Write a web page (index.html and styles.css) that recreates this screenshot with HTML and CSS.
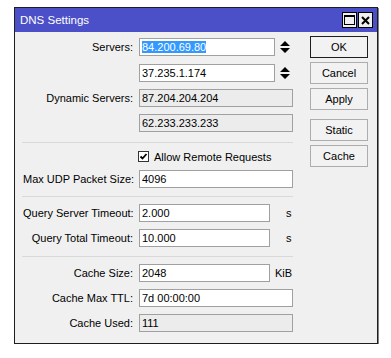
FILE: index.html
```html
<!DOCTYPE html>
<html lang="en">
<head>
    <meta charset="UTF-8">
    <meta name="viewport" content="width=device-width, initial-scale=1.0">
    <title>DNS Settings</title>
    <link rel="stylesheet" href="styles.css">
</head>
<body>
    <div class="window">
        <div class="titlebar">
            <span class="title">DNS Settings</span>
            <div class="title-buttons">
                <span class="tbtn">
                    <svg width="11" height="10" viewBox="0 0 11 10"><rect x="0.5" y="0.5" width="10" height="9" fill="none" stroke="#000"/><rect x="0" y="0" width="11" height="2" fill="#000"/></svg>
                </span>
                <span class="tbtn">
                    <svg width="9" height="9" viewBox="0 0 9 9"><path d="M1 1 L8 8 M8 1 L1 8" stroke="#000" stroke-width="2"/></svg>
                </span>
            </div>
        </div>
        <div class="content">
            <div class="form">
                <div class="row first">
                    <span class="label">Servers:</span>
                    <div class="field short"><span class="sel">84.200.69.80</span></div>
                    <span class="spin">
                        <svg width="10" height="14" viewBox="0 0 10 14"><path d="M5 1 L10 6 L0 6 Z M0 8 L10 8 L5 13 Z" fill="#000"/></svg>
                    </span>
                </div>
                <div class="row second">
                    <span class="label"></span>
                    <div class="field short">37.235.1.174</div>
                    <span class="spin">
                        <svg width="10" height="14" viewBox="0 0 10 14"><path d="M5 1 L10 6 L0 6 Z M0 8 L10 8 L5 13 Z" fill="#000"/></svg>
                    </span>
                </div>
                <div class="row">
                    <span class="label">Dynamic Servers:</span>
                    <div class="field wide readonly">87.204.204.204</div>
                </div>
                <div class="row">
                    <span class="label"></span>
                    <div class="field wide readonly">62.233.233.233</div>
                </div>
                <div class="sep sep-a"></div>
                <div class="check-row">
                    <span class="label"></span>
                    <span class="checkbox">
                        <svg width="9" height="9" viewBox="0 0 9 9"><path d="M1.5 4.5 L3.5 6.5 L7.5 2" fill="none" stroke="#000" stroke-width="1.8"/></svg>
                    </span>
                    <span class="check-label">Allow Remote Requests</span>
                </div>
                <div class="row">
                    <span class="label">Max UDP Packet Size:</span>
                    <div class="field wide">4096</div>
                </div>
                <div class="sep sep-b"></div>
                <div class="row after-sep">
                    <span class="label">Query Server Timeout:</span>
                    <div class="field mid">2.000</div>
                    <span class="unit unit-s">s</span>
                </div>
                <div class="row">
                    <span class="label">Query Total Timeout:</span>
                    <div class="field mid">10.000</div>
                    <span class="unit unit-s">s</span>
                </div>
                <div class="sep sep-c"></div>
                <div class="row after-sep">
                    <span class="label">Cache Size:</span>
                    <div class="field mid">2048</div>
                    <span class="unit unit-kib">KiB</span>
                </div>
                <div class="row">
                    <span class="label">Cache Max TTL:</span>
                    <div class="field wide">7d 00:00:00</div>
                </div>
                <div class="row">
                    <span class="label">Cache Used:</span>
                    <div class="field wide readonly">111</div>
                </div>
            </div>
            <div class="buttons">
                <button class="btn default">OK</button>
                <button class="btn">Cancel</button>
                <button class="btn">Apply</button>
                <button class="btn spaced">Static</button>
                <button class="btn">Cache</button>
            </div>
        </div>
    </div>
</body>
</html>
```

FILE: styles.css
```css
body {
    margin: 0;
    padding: 7px 0 0 14px;
    background: white;
    font-family: "Liberation Sans", Arial, sans-serif;
    font-size: 11px;
    color: #000;
}

.window {
    width: 362px;
    background: #f0f0f0;
    border: 1px solid #1e1e1e;
    box-shadow: 1px 1px 0 #808080;
}

.titlebar {
    height: 24px;
    background: #4b50c9;
    display: flex;
    align-items: center;
    justify-content: space-between;
    padding: 0 4px 0 5px;
}

.title {
    color: white;
    font-size: 11.5px;
}

.title-buttons {
    display: flex;
    gap: 1px;
}

.tbtn {
    width: 13px;
    height: 14px;
    border: 1px solid #000;
    background: #f0f0f0;
    display: flex;
    align-items: center;
    justify-content: center;
}

.content {
    display: flex;
    padding-bottom: 11px;
}

.form {
    width: 295px;
    display: flex;
    flex-direction: column;
    padding: 6px 0 0 8px;
    box-sizing: border-box;
}

.row {
    display: flex;
    align-items: center;
    height: 18px;
    margin-top: 7px;
}

.row.first {
    margin-top: 0;
}

.row.second {
    margin-top: 8px;
}

.label {
    width: 110px;
    flex: none;
    text-align: right;
    margin-right: 6px;
    white-space: nowrap;
}

.field {
    height: 18px;
    box-sizing: border-box;
    border: 1px solid #a0a0a0;
    background: white;
    padding: 0 2px;
    display: flex;
    align-items: center;
    white-space: nowrap;
}

.field.readonly {
    background: #ececec;
}

.field.short {
    width: 136px;
}

.field.mid {
    width: 131px;
}

.field.wide {
    width: 154px;
}

.sel {
    background: #3399ff;
    color: white;
}

.spin {
    display: flex;
    margin-left: 5px;
}

.unit-s {
    margin-left: 16px;
}

.unit-kib {
    margin-left: 5px;
}

.sep {
    height: 1px;
    width: 271px;
    background: #d9d9d9;
    margin-left: -1px;
}

.sep-a {
    margin-top: 10px;
}

.sep-b {
    margin-top: 8px;
}

.sep-c {
    margin-top: 9px;
}

.check-row {
    display: flex;
    align-items: center;
    height: 13px;
    margin-top: 7px;
}

.check-row .label {
    margin-right: 0;
    width: 115px;
}

.checkbox {
    width: 11px;
    height: 11px;
    box-sizing: border-box;
    border: 1px solid #333;
    background: white;
    display: flex;
    align-items: center;
    justify-content: center;
}

.check-label {
    margin-left: 5px;
}

.buttons {
    display: flex;
    flex-direction: column;
    gap: 4px;
    padding-top: 4px;
}

.btn {
    width: 58px;
    height: 22px;
    margin: 0;
    padding: 0;
    font-family: inherit;
    font-size: 11px;
    color: #000;
    background: #f2f2f2;
    border: 1px solid #adadad;
}

.btn.default {
    border: 1px solid #1e1e1e;
}

.btn.spaced {
    margin-top: 5px;
}
```
